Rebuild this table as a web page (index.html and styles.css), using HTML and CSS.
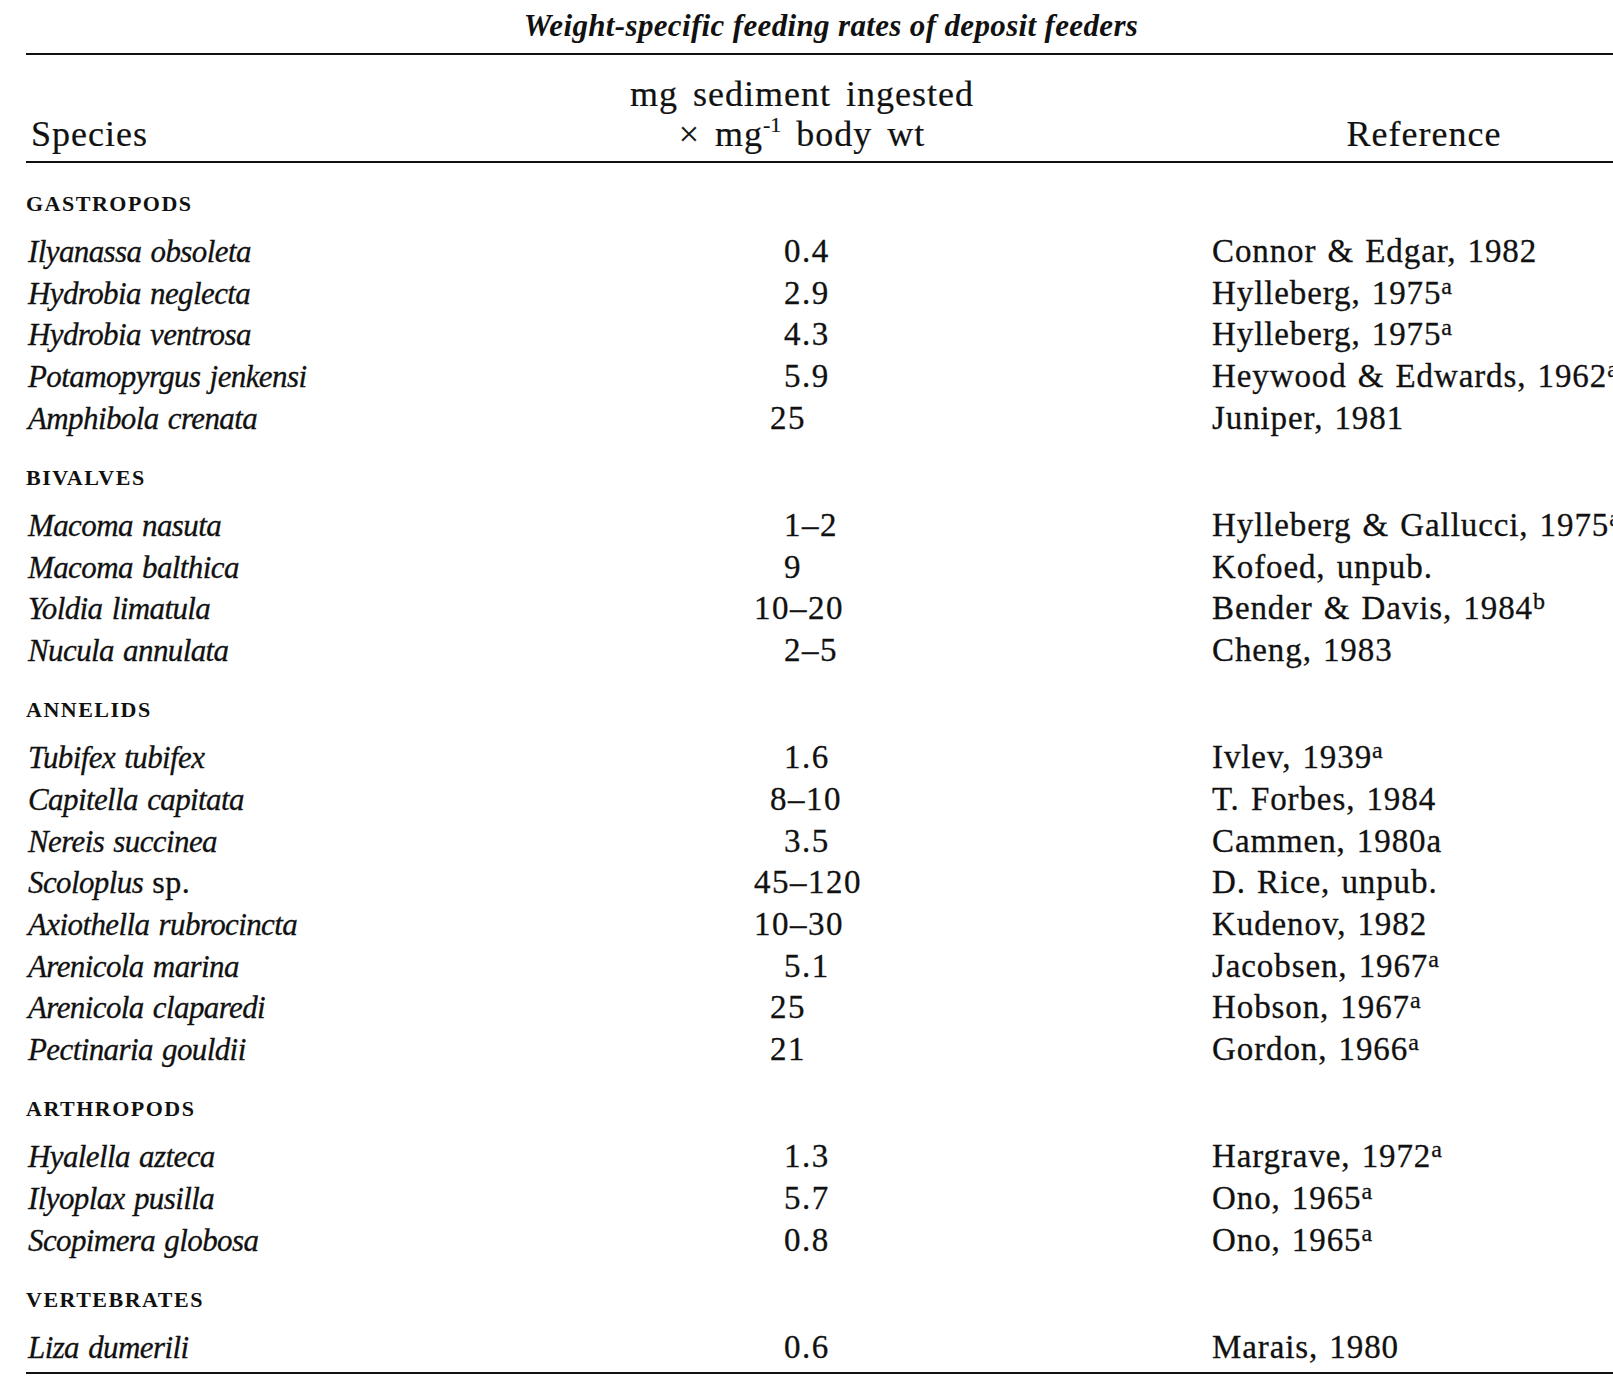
FILE: index.html
```html
<!DOCTYPE html>
<html lang="en">
<head>
<meta charset="utf-8">
<title>Weight-specific feeding rates of deposit feeders</title>
<link rel="stylesheet" href="styles.css">
</head>
<body>
<div class="table">
  <div class="caption">Weight-specific feeding rates of deposit feeders</div>
  <div class="rule"></div>
  <div class="thead">
    <div class="th th-species">Species</div>
    <div class="th th-rate">mg sediment ingested<br>× mg<sup class="exp">-1</sup> body wt</div>
    <div class="th th-ref">Reference</div>
  </div>
  <div class="rule"></div>

  <div class="group group-first">GASTROPODS</div>
  <div class="row"><div class="sp">Ilyanassa obsoleta</div><div class="num"><span>0.4</span></div><div class="ref">Connor &amp; Edgar, 1982</div></div>
  <div class="row"><div class="sp">Hydrobia neglecta</div><div class="num"><span>2.9</span></div><div class="ref">Hylleberg, 1975<sup class="fn">a</sup></div></div>
  <div class="row"><div class="sp">Hydrobia ventrosa</div><div class="num"><span>4.3</span></div><div class="ref">Hylleberg, 1975<sup class="fn">a</sup></div></div>
  <div class="row"><div class="sp">Potamopyrgus jenkensi</div><div class="num"><span>5.9</span></div><div class="ref">Heywood &amp; Edwards, 1962<sup class="fn">a</sup></div></div>
  <div class="row"><div class="sp">Amphibola crenata</div><div class="num w2"><span>25</span></div><div class="ref">Juniper, 1981</div></div>

  <div class="group">BIVALVES</div>
  <div class="row"><div class="sp">Macoma nasuta</div><div class="num"><span>1–2</span></div><div class="ref">Hylleberg &amp; Gallucci, 1975<sup class="fn">a</sup></div></div>
  <div class="row"><div class="sp">Macoma balthica</div><div class="num"><span>9</span></div><div class="ref">Kofoed, unpub.</div></div>
  <div class="row"><div class="sp">Yoldia limatula</div><div class="num w3"><span>10–20</span></div><div class="ref">Bender &amp; Davis, 1984<sup class="fn">b</sup></div></div>
  <div class="row"><div class="sp">Nucula annulata</div><div class="num"><span>2–5</span></div><div class="ref">Cheng, 1983</div></div>

  <div class="group">ANNELIDS</div>
  <div class="row"><div class="sp">Tubifex tubifex</div><div class="num"><span>1.6</span></div><div class="ref">Ivlev, 1939<sup class="fn">a</sup></div></div>
  <div class="row"><div class="sp">Capitella capitata</div><div class="num w2"><span>8–10</span></div><div class="ref">T. Forbes, 1984</div></div>
  <div class="row"><div class="sp">Nereis succinea</div><div class="num"><span>3.5</span></div><div class="ref">Cammen, 1980a</div></div>
  <div class="row"><div class="sp">Scoloplus <span class="rm">sp.</span></div><div class="num w3"><span>45–120</span></div><div class="ref">D. Rice, unpub.</div></div>
  <div class="row"><div class="sp">Axiothella rubrocincta</div><div class="num w3"><span>10–30</span></div><div class="ref">Kudenov, 1982</div></div>
  <div class="row"><div class="sp">Arenicola marina</div><div class="num"><span>5.1</span></div><div class="ref">Jacobsen, 1967<sup class="fn">a</sup></div></div>
  <div class="row"><div class="sp">Arenicola claparedi</div><div class="num w2"><span>25</span></div><div class="ref">Hobson, 1967<sup class="fn">a</sup></div></div>
  <div class="row"><div class="sp">Pectinaria gouldii</div><div class="num w2"><span>21</span></div><div class="ref">Gordon, 1966<sup class="fn">a</sup></div></div>

  <div class="group">ARTHROPODS</div>
  <div class="row"><div class="sp">Hyalella azteca</div><div class="num"><span>1.3</span></div><div class="ref">Hargrave, 1972<sup class="fn">a</sup></div></div>
  <div class="row"><div class="sp">Ilyoplax pusilla</div><div class="num"><span>5.7</span></div><div class="ref">Ono, 1965<sup class="fn">a</sup></div></div>
  <div class="row"><div class="sp">Scopimera globosa</div><div class="num"><span>0.8</span></div><div class="ref">Ono, 1965<sup class="fn">a</sup></div></div>

  <div class="group">VERTEBRATES</div>
  <div class="row"><div class="sp">Liza dumerili</div><div class="num"><span>0.6</span></div><div class="ref">Marais, 1980</div></div>

  <div class="rule rule-bottom"></div>
</div>
</body>
</html>
```

FILE: styles.css
```css
html, body {
  margin: 0;
  padding: 0;
  overflow: hidden;
  background: #ffffff;
}

body {
  color: #111111;
  font-family: "Liberation Serif", "Times New Roman", serif;
}

.table {
  width: 1610px;
  margin-left: 26px;
  padding-top: 8px;
}

.caption {
  text-align: center;
  font-style: italic;
  font-weight: 700;
  font-size: 31px;
  letter-spacing: 0.35px;
  line-height: 36px;
  margin-bottom: 8.5px;
  white-space: nowrap;
}

.rule {
  border-top: 2px solid #111111;
}

.thead {
  display: grid;
  grid-template-columns: 366px 820px 1fr;
  align-items: end;
  padding-top: 19px;
  padding-bottom: 6px;
  font-size: 36px;
  line-height: 40.5px;
  letter-spacing: 1px;
  word-spacing: 5px;
  white-space: nowrap;
  -webkit-text-stroke: 0.2px #111111;
}

.th-species {
  padding-left: 5px;
}

.th-rate {
  text-align: center;
}

.th-ref {
  text-align: center;
}

.exp {
  font-size: 22px;
  line-height: 0;
  vertical-align: 14px;
  letter-spacing: 0;
}

.group {
  font-size: 22px;
  font-weight: 700;
  letter-spacing: 1.5px;
  line-height: 24px;
  margin-top: 26.5px;
  margin-bottom: 15px;
  padding-left: 0;
}

.group-first {
  margin-top: 29.5px;
}

.row {
  display: grid;
  grid-template-columns: 366px 820px 1fr;
  align-items: center;
  height: 41.7px;
  line-height: 41.7px;
  white-space: nowrap;
  -webkit-text-stroke: 0.3px #111111;
}

.sp {
  padding-left: 2px;
  font-style: italic;
  font-size: 31px;
  letter-spacing: -0.6px;
  word-spacing: 2px;
}

.rm {
  font-style: normal;
  font-size: 32px;
  letter-spacing: 0.5px;
}

.num {
  display: flex;
  justify-content: center;
  font-size: 33px;
  letter-spacing: 1.5px;
}

.num span {
  display: block;
  width: 100px;
  padding-left: 32px;
  box-sizing: border-box;
}

.num.w2 span {
  padding-left: 18px;
}

.num.w3 span {
  padding-left: 2px;
}

.ref {
  font-size: 33px;
  letter-spacing: 0.9px;
  word-spacing: 2px;
}

.fn {
  font-size: 24px;
  line-height: 0;
  vertical-align: 10px;
  letter-spacing: 0;
}

.rule-bottom {
  margin-top: 4px;
}
```
